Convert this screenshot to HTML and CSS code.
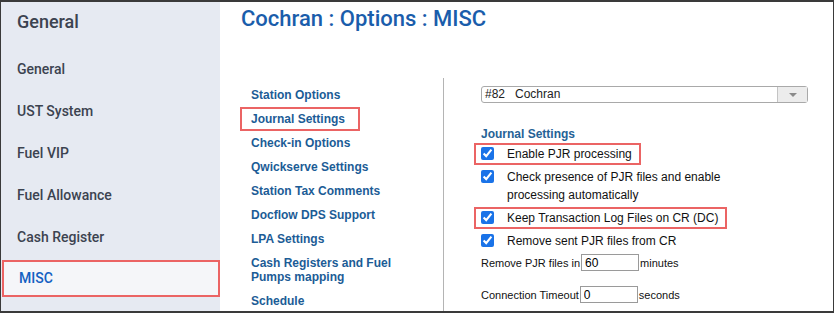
FILE: index.html
```html
<!DOCTYPE html>
<html lang="en">
<head>
    <meta charset="UTF-8">
    <meta name="viewport" content="width=device-width, initial-scale=1.0">
    <title>Cochran : Options : MISC</title>
    <link rel="stylesheet" href="styles.css">
</head>
<body>

<div id="frame">
    <div id="sidebar">
        <div class="side-title">General</div>
        <div class="side-item">General</div>
        <div class="side-item">UST System</div>
        <div class="side-item">Fuel VIP</div>
        <div class="side-item">Fuel Allowance</div>
        <div class="side-item">Cash Register</div>
        <div class="side-item active">MISC</div>
    </div>

    <div id="main">
        <h1 class="page-title">Cochran : Options : MISC</h1>

        <div class="columns">
            <div class="links">
                <a class="link">Station Options</a>
                <a class="link marked">Journal Settings</a>
                <a class="link">Check-in Options</a>
                <a class="link">Qwickserve Settings</a>
                <a class="link">Station Tax Comments</a>
                <a class="link">Docflow DPS Support</a>
                <a class="link">LPA Settings</a>
                <a class="link">Cash Registers and Fuel Pumps mapping</a>
                <a class="link">Schedule</a>
            </div>

            <div class="settings">
                <div class="select">
                    <span class="select-text">#82&nbsp;&nbsp;&nbsp;Cochran</span>
                    <span class="select-btn"><span class="arrow"></span></span>
                </div>

                <div class="section-title">Journal Settings</div>

                <label class="opt marked">
                    <input type="checkbox" checked>
                    <span class="opt-label">Enable PJR processing</span>
                </label>
                <label class="opt">
                    <input type="checkbox" checked>
                    <span class="opt-label">Check presence of PJR files and enable processing automatically</span>
                </label>
                <label class="opt marked">
                    <input type="checkbox" checked>
                    <span class="opt-label">Keep Transaction Log Files on CR (DC)</span>
                </label>
                <label class="opt">
                    <input type="checkbox" checked>
                    <span class="opt-label">Remove sent PJR files from CR</span>
                </label>

                <div class="field first">
                    <span>Remove PJR files in</span>
                    <input type="text" value="60">
                    <span>minutes</span>
                </div>
                <div class="field second">
                    <span>Connection Timeout</span>
                    <input type="text" value="0">
                    <span>seconds</span>
                </div>
            </div>
        </div>
    </div>
</div>

</body>
</html>
```

FILE: styles.css
```css
body {
    margin: 0;
    padding: 0;
    background-color: #fff;
    overflow: hidden;
}

#frame {
    display: flex;
    width: 834px;
    height: 313px;
    box-sizing: border-box;
    border: 1px solid #3a3a3a;
    border-top-width: 2px;
    border-bottom-width: 2px;
    overflow: hidden;
}

/* left menu */
#sidebar {
    width: 219px;
    flex-shrink: 0;
    background-color: #e6eaf2;
    font-family: Roboto, "Liberation Sans", sans-serif;
    color: #3c4350;
}

.side-title {
    height: 40px;
    line-height: 40px;
    margin-bottom: 6px;
    padding-left: 16px;
    font-size: 18px;
    font-weight: 500;
}

.side-item {
    height: 42px;
    line-height: 42px;
    padding-left: 16px;
    font-size: 14px;
    font-weight: 500;
}

.side-item.active {
    box-sizing: border-box;
    height: 37px;
    line-height: 33px;
    margin: 2px 0 3px 1px;
    padding-left: 15px;
    border: 2px solid #eb6464;
    background-color: #f5f6f9;
    color: #1360c2;
}

/* main area */
#main {
    flex: 1;
    padding-left: 21px;
    font-family: "Liberation Sans", Arial, sans-serif;
}

.page-title {
    margin: 0;
    height: 76px;
    padding-top: 4px;
    box-sizing: border-box;
    font-family: Roboto, "Liberation Sans", sans-serif;
    font-size: 22px;
    font-weight: 500;
    color: #1a5dab;
}

.columns {
    display: flex;
    height: 240px;
}

.links {
    width: 192px;
    padding: 5px 0 0 10px;
}

.link {
    display: block;
    width: 160px;
    padding: 5px 0;
    line-height: 14px;
    font-size: 12px;
    font-weight: bold;
    color: #1c5c96;
    cursor: pointer;
}

.link.marked {
    width: fit-content;
    margin-left: -11px;
    padding: 3px 13px 3px 9px;
    border: 2px solid #eb6464;
}

.settings {
    flex: 1;
    padding: 8px 0 0 37px;
    border-left: 1px solid #b4b4b4;
    font-size: 12px;
    color: #111;
}

.select {
    display: flex;
    width: 327px;
    height: 17px;
    box-sizing: border-box;
    border: 1px solid #a9a9a9;
    border-radius: 3px;
}

.select-text {
    flex: 1;
    padding-left: 3px;
    line-height: 15px;
    color: #222;
}

.select-btn {
    display: flex;
    align-items: center;
    justify-content: center;
    width: 29px;
    border-left: 1px solid #c4c4c4;
    background-color: #ececec;
}

.arrow {
    width: 0;
    height: 0;
    border-left: 4px solid transparent;
    border-right: 4px solid transparent;
    border-top: 4px solid #8a8a8a;
}

.section-title {
    margin-top: 23px;
    line-height: 16px;
    font-weight: bold;
    color: #256296;
}

.opt {
    display: flex;
    align-items: flex-start;
    margin-top: 5px;
    line-height: 18px;
}

.opt:first-of-type {
    margin-top: 3px;
}

.opt input {
    width: 13px;
    height: 13px;
    margin: 2px 13px 0 0;
    accent-color: #1a73e8;
}

.opt-label {
    width: 225px;
}

.opt.marked {
    width: fit-content;
    margin-left: -5px;
    padding: 0 7px 0 5px;
    outline: 2px solid #eb6464;
}

.opt.marked .opt-label {
    width: auto;
}

.field {
    display: flex;
    align-items: center;
    font-size: 11px;
}

.field.first {
    margin-top: 4px;
}

.field.second {
    margin-top: 15px;
}

.field input {
    width: 58px;
    height: 17px;
    box-sizing: border-box;
    margin: 0 1px;
    padding: 0 3px;
    border: 1px solid #9a9a9a;
    font-family: "Liberation Sans", Arial, sans-serif;
    font-size: 12px;
}
```
